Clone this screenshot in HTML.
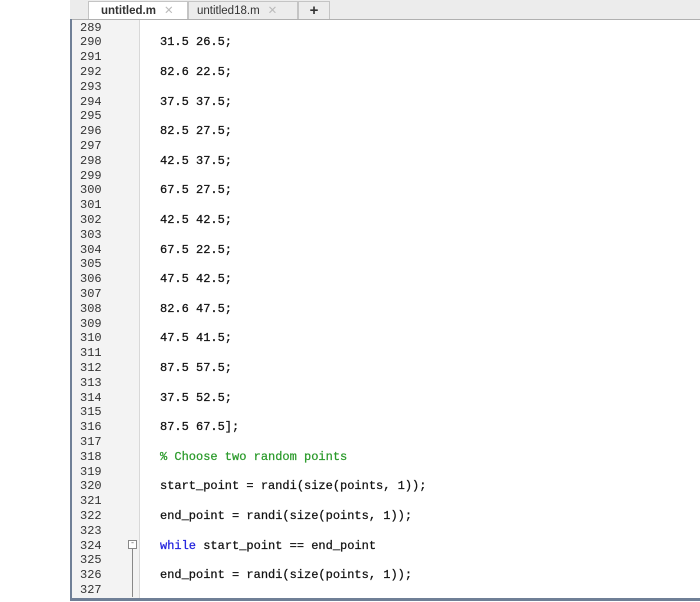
<!DOCTYPE html><html><head><style>
body{margin:0;width:700px;height:602px;background:#fff;position:relative;overflow:hidden;font-family:"Liberation Mono",monospace;}
.tabbar{position:absolute;left:70px;top:0;width:630px;height:19px;background:#ececec;border-bottom:1px solid #b0b0b0;}
.tab{position:absolute;top:1px;height:18px;font:bold 11.5px "Liberation Sans",sans-serif;color:#333;line-height:18px;box-sizing:border-box;border:1px solid #c4c4c4;border-bottom:none;}
.x{color:#bbb;font-weight:normal;margin-left:8px}
.frame{position:absolute;left:70px;top:19px;width:640px;height:582px;border-left:2px solid #6f7f96;border-bottom:3px solid #6f7f96;box-sizing:border-box;z-index:2;}
.gutter{position:absolute;left:72px;top:20px;width:67px;height:578px;background:#f3f3f3;border-right:1px solid #d8d8d8;}
.ln{position:absolute;left:80px;font-size:12px;line-height:14.8px;color:#333;}
.cd{position:absolute;left:160px;font-size:12px;line-height:14.8px;color:#111;white-space:pre;-webkit-text-stroke:0.25px #111;}
.cm{color:#2a9a2a;-webkit-text-stroke:0.25px #2a9a2a}.kw{color:#2222dd;-webkit-text-stroke:0.25px #2222dd}
</style></head><body>
<div class="tabbar">
<div class="tab" style="left:18px;width:100px;background:#fff;padding-left:12px;">untitled.m<span class="x">✕</span></div>
<div class="tab" style="left:118px;width:110px;padding-left:8px;font-weight:normal;">untitled18.m<span class="x">✕</span></div>
<div class="tab" style="left:228px;width:32px;text-align:center;font-size:15px;">+</div>
</div>
<div class="gutter"></div>
<div class="frame"></div>
<div style="position:absolute;left:128px;top:540px;width:7px;height:7px;border:1px solid #888;background:#fff;font-size:8px;line-height:6px;text-align:center;color:#555">-</div>
<div style="position:absolute;left:132px;top:549px;width:1px;height:48px;background:#888"></div>
<div id="c"></div>
<script>
var codes={290:"31.5 26.5;",292:"82.6 22.5;",294:"37.5 37.5;",296:"82.5 27.5;",298:"42.5 37.5;",300:"67.5 27.5;",302:"42.5 42.5;",304:"67.5 22.5;",306:"47.5 42.5;",308:"82.6 47.5;",310:"47.5 41.5;",312:"87.5 57.5;",314:"37.5 52.5;",316:"87.5 67.5];",318:'<span class="cm">% Choose two random points</span>',320:"start_point = randi(size(points, 1));",322:"end_point = randi(size(points, 1));",324:'<span class="kw">while</span> start_point == end_point',326:"end_point = randi(size(points, 1));"};
var h="";for(var n=289;n<=327;n++){var t=20.5+(n-289)*14.8;h+='<div class="ln" style="top:'+t+'px">'+n+'</div>';if(codes[n])h+='<div class="cd" style="top:'+t+'px">'+codes[n]+'</div>';}
document.getElementById("c").innerHTML=h;
</script>
</body></html>
